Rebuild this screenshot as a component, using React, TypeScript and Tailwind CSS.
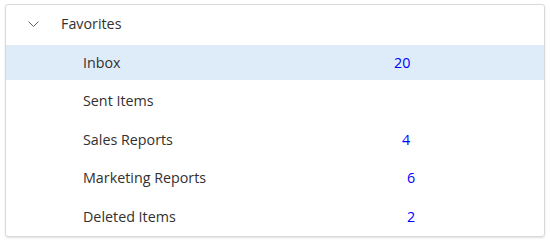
const items = [
  { name: "Inbox", count: "20", selected: true, numClass: "ml-0" },
  { name: "Sent Items", count: "", selected: false, numClass: "ml-0" },
  { name: "Sales Reports", count: "4", selected: false, numClass: "ml-[8px]" },
  { name: "Marketing Reports", count: "6", selected: false, numClass: "ml-[13px]" },
  { name: "Deleted Items", count: "2", selected: false, numClass: "ml-[13px]" },
];

export default function App() {
  return (
    <div className="w-[550px] h-[243px] bg-white pl-[5px] pt-[4px] font-['Open_Sans',sans-serif] text-[14.3px] text-[#323130]">
      <div className="w-[540px] h-[233px] border border-[#d9d9d9] rounded-[3px] shadow-[0_1px_2px_rgba(0,0,0,0.12)] overflow-hidden">
        {/* group header */}
        <div className="h-[40px] flex items-center pb-[3px]">
          <svg width="11" height="6" viewBox="0 0 11 6" className="ml-[22px]" fill="none">
            <path d="M0.5 0.5 L5.5 5.5 L10.5 0.5" stroke="#605e5c" strokeWidth="1" />
          </svg>
          <span className="ml-[22px]">Favorites</span>
        </div>
        <div className="flex flex-col gap-[3.5px]">
          {items.map((it) => (
            <div
              key={it.name}
              className={`h-[35px] flex items-center ${it.selected ? "bg-[#deecf9]" : ""}`}
            >
              <span className="w-[311px] ml-[77px] shrink-0">{it.name}</span>
              <span className={`text-[#0000ff] ${it.numClass}`}>{it.count}</span>
            </div>
          ))}
        </div>
      </div>
    </div>
  );
}
